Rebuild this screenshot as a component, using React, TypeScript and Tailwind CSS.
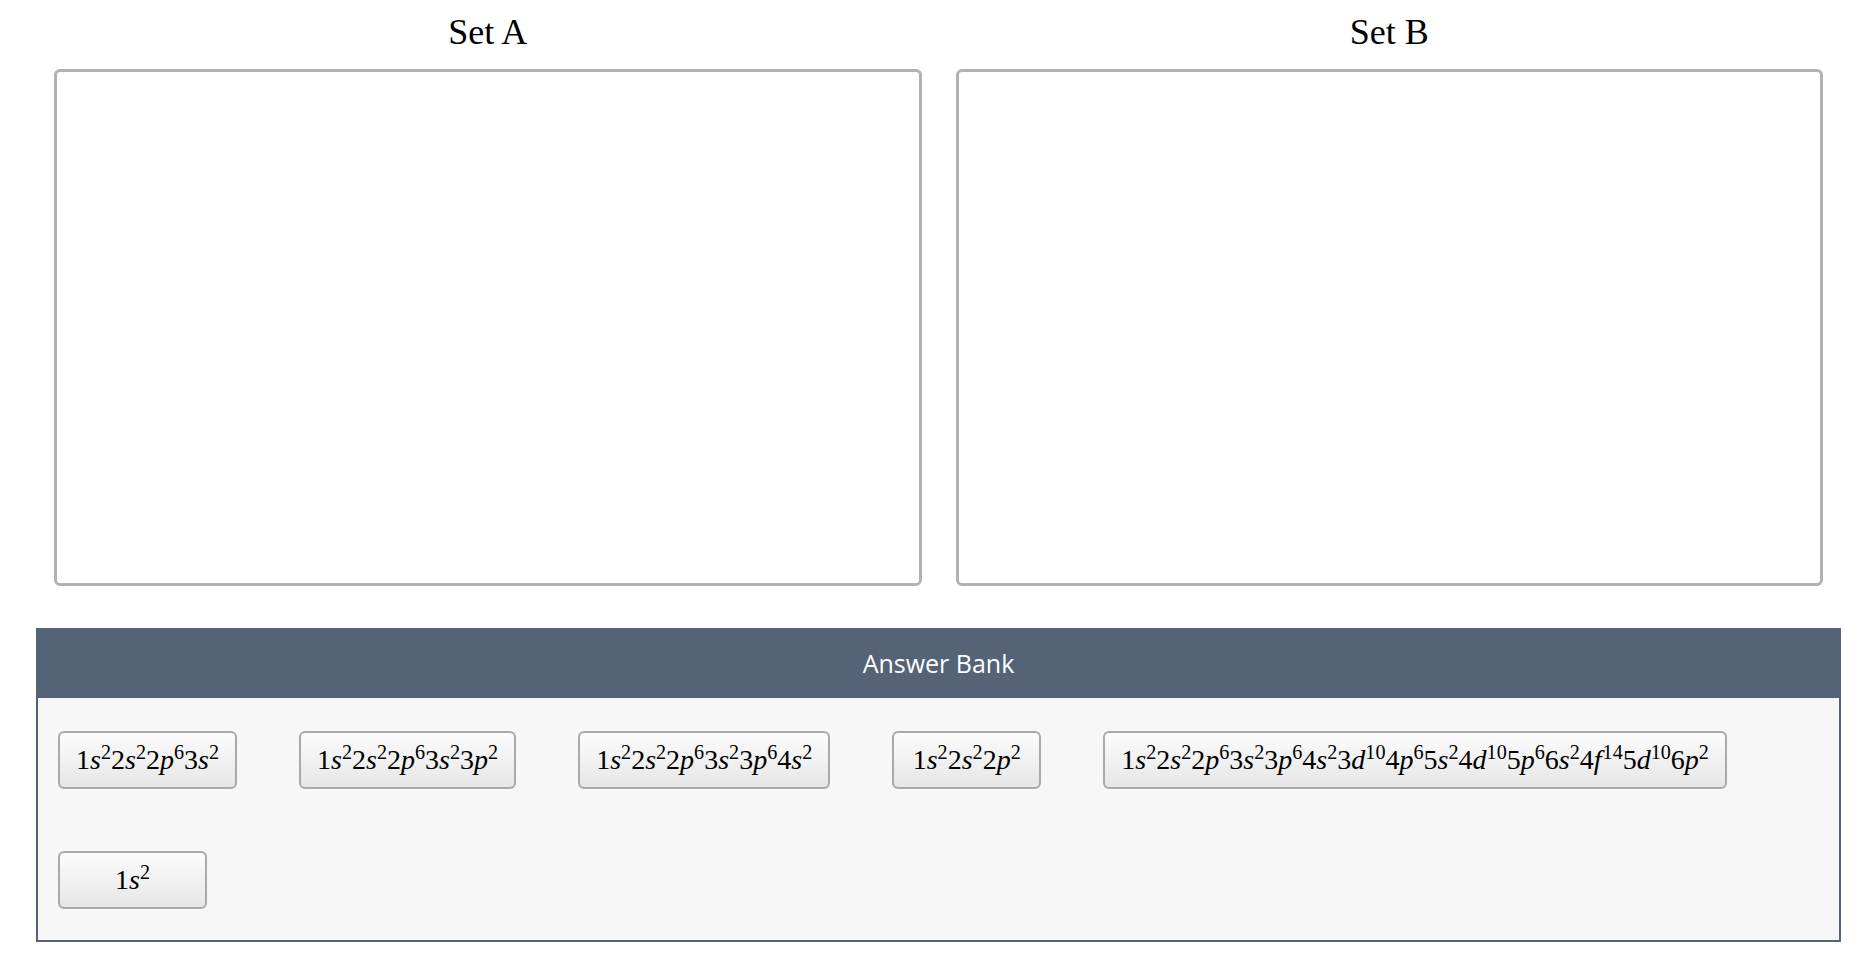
import React from "react";

type Term = { n: string; l: string; e: string };

const parse = (s: string): Term[] => {
  const re = /(\d)([spdf])(\d+)/g;
  const out: Term[] = [];
  let m: RegExpExecArray | null;
  while ((m = re.exec(s))) out.push({ n: m[1], l: m[2], e: m[3] });
  return out;
};

const configs = [
  "1s2 2s2 2p6 3s2",
  "1s2 2s2 2p6 3s2 3p2",
  "1s2 2s2 2p6 3s2 3p6 4s2",
  "1s2 2s2 2p2",
  "1s2 2s2 2p6 3s2 3p6 4s2 3d10 4p6 5s2 4d10 5p6 6s2 4f14 5d10 6p2",
  "1s2",
];

function Config({ text }: { text: string }) {
  return (
    <span className="whitespace-nowrap">
      {parse(text).map((t, i) => (
        <React.Fragment key={i}>
          <span>{t.n}</span>
          <span className={t.l === "f" ? "italic pr-[1px]" : "italic"}>{t.l}</span>
          <span className="relative -top-[0.5em] text-[0.72em]">{t.e}</span>
        </React.Fragment>
      ))}
    </span>
  );
}

function Chip({ text }: { text: string }) {
  return (
    <div className="h-[58px] min-w-[149px] px-[16px] flex items-center justify-center rounded-[6px] border-2 border-[#a9a9a9] bg-gradient-to-b from-[#fcfcfc] to-[#e6e6e6] text-black text-[28px] font-['Liberation_Serif',serif] leading-none">
      <Config text={text} />
    </div>
  );
}

function SetBox({ title }: { title: string }) {
  return (
    <div className="flex flex-col">
      <h2 className="text-center text-[36px] leading-[39px] text-black font-['Liberation_Serif',serif]">
        {title}
      </h2>
      <div className="mt-[17px] h-[517px] rounded-[6px] border-[3px] border-[#b2b2b2] bg-white" />
    </div>
  );
}

export default function App() {
  return (
    <div className="w-full min-h-screen bg-white pt-[13px] pl-[36px] pr-[25px]">
      <div className="grid grid-cols-2 gap-x-[34px] px-[18px]">
        <SetBox title="Set A" />
        <SetBox title="Set B" />
      </div>
      <div className="mt-[42px] border-2 border-[#546378]">
        <div className="h-[68px] bg-[#546378] flex items-center justify-center text-white text-[25px] font-['Open_Sans',sans-serif]">
          Answer Bank
        </div>
        <div className="bg-[#f7f7f7] flex flex-wrap gap-x-[62px] gap-y-[62px] px-[20px] pt-[33px] pb-[31px]">
          {configs.map((c, i) => (
            <Chip key={i} text={c} />
          ))}
        </div>
      </div>
    </div>
  );
}
